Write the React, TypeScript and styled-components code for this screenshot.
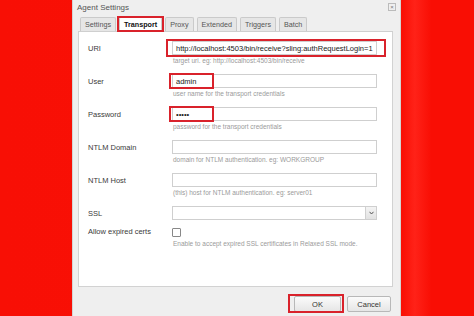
import React from "react";
import styled, { createGlobalStyle } from "styled-components";

const Global = createGlobalStyle`
  html, body { margin: 0; padding: 0; }
  body { width: 474px; height: 316px; overflow: hidden; font-family: "Liberation Sans", Arial, sans-serif; }
`;

const Page = styled.div`
  width: 474px;
  height: 316px;
  background: linear-gradient(90deg, #f80f05 0%, #fa1006 85%, #ff2218 87.5%, #f90e04 91%);
  display: flex;
  justify-content: center;
`;

const Dialog = styled.div`
  width: 329px;
  height: 316px;
  margin-left: -1px;
  background: #efefef;
  border-left: 1px solid #d4d4d4;
  border-right: 1px solid #d4d4d4;
  box-sizing: border-box;
  display: flex;
  flex-direction: column;
`;

const Header = styled.div`
  height: 15px;
  display: flex;
  align-items: center;
  justify-content: space-between;
  padding: 0 4px 0 4px;
  font-size: 8px;
  color: #555;
`;

const Close = styled.div`
  width: 6px;
  height: 6px;
  border: 1px solid #bbb;
  display: flex;
  align-items: center;
  justify-content: center;
  font-size: 6px;
  line-height: 6px;
  color: #777;
  margin-top: -2px;
`;

const TabStrip = styled.div`
  height: 16px;
  display: flex;
  align-items: flex-end;
  gap: 3px;
  padding-left: 2px;
  margin: 0 7px 0 5px;
  border-bottom: 1px solid #cfcfcf;
`;

const Tab = styled.div<{ $active?: boolean }>`
  position: relative;
  height: 13px;
  padding: 0 4px;
  display: flex;
  align-items: center;
  font-size: 7.2px;
  color: ${p => (p.$active ? "#111" : "#555")};
  font-weight: ${p => (p.$active ? 700 : 400)};
  background: ${p => (p.$active ? "#fff" : "#e6e6e6")};
  border: 1px solid #cacaca;
  border-bottom: none;
  border-radius: 2px 2px 0 0;
`;

const RedBox = styled.span`
  position: absolute;
  border: 2px solid #d9222b;
  pointer-events: none;
`;

const Panel = styled.div`
  flex: 1;
  margin: 0 7px 0 5px;
  background: #fff;
  border: 1px solid #d2d2d2;
  border-top: none;
  padding: 9px 0 0 9px;
  display: flex;
  flex-direction: column;
`;

const Row = styled.div<{ $h: number }>`
  display: grid;
  grid-template-columns: 84px 205px;
  height: ${p => p.$h}px;
`;

const Label = styled.div<{ $pt?: number }>`
  font-size: 7.5px;
  color: #3a3a3a;
  padding-top: ${p => (p.$pt ?? 3)}px;
`;

const Field = styled.div`
  display: flex;
  flex-direction: column;
`;

const InputBox = styled.div`
  position: relative;
  height: 14px;
  box-sizing: border-box;
  border: 1px solid #cfcfcf;
  background: #fff;
  display: flex;
  align-items: center;
  padding-left: 3px;
  font-size: 7.5px;
  color: #222;
  white-space: nowrap;
`;

const Arrow = styled.div`
  position: absolute;
  right: 0;
  top: 0;
  bottom: 0;
  width: 10px;
  background: linear-gradient(#f4f4f4, #e2e2e2);
  border-left: 1px solid #d0d0d0;
  display: flex;
  align-items: center;
  justify-content: center;
`;

const Hint = styled.div`
  font-size: 6.5px;
  color: #9a9a9a;
  padding: 2px 0 0 1px;
  white-space: nowrap;
`;

const Check = styled.div`
  width: 7px;
  height: 7px;
  border: 1px solid #888;
  border-radius: 1px;
  margin-top: 1px;
  margin-bottom: 1px;
`;

const Footer = styled.div`
  height: 29px;
  box-sizing: border-box;
  display: flex;
  align-items: flex-start;
  justify-content: flex-end;
  gap: 6px;
  padding: 9px 9px 0 0;
`;

const Button = styled.div<{ $w: number }>`
  position: relative;
  width: ${p => p.$w}px;
  height: 16px;
  box-sizing: border-box;
  border: 1px solid #b8b8b8;
  border-radius: 2px;
  background: linear-gradient(#fbfbfb, #e6e6e6);
  display: flex;
  align-items: center;
  justify-content: center;
  font-size: 7.5px;
  color: #333;
`;

type F = { label: string; value?: string; hint?: string; red?: [number, number, number]; select?: boolean };

const fields: F[] = [
  { label: "URI", value: "http://localhost:4503/bin/receive?sling:authRequestLogin=1", hint: "target uri. eg: http://localhost:4503/bin/receive", red: [-7, 216, -3] },
  { label: "User", value: "admin", hint: "user name for the transport credentials", red: [-4, 41, -2] },
  { label: "Password", value: "\u2022\u2022\u2022\u2022\u2022", hint: "password for the transport credentials", red: [-4, 41, -2] },
  { label: "NTLM Domain", hint: "domain for NTLM authentication. eg: WORKGROUP" },
  { label: "NTLM Host", hint: "(this) host for NTLM authentication. eg: server01" },
  { label: "SSL", select: true },
];

export default function App() {
  return (
    <>
      <Global />
      <Page>
        <Dialog>
          <Header>
            <span>Agent Settings</span>
            <Close>×</Close>
          </Header>
          <TabStrip>
            <Tab>Settings</Tab>
            <Tab $active>
              Transport
              <RedBox style={{ left: -3, top: -2, right: -3, bottom: -1 }} />
            </Tab>
            <Tab>Proxy</Tab>
            <Tab>Extended</Tab>
            <Tab>Triggers</Tab>
            <Tab>Batch</Tab>
          </TabStrip>
          <Panel>
            {fields.map(f => (
              <Row key={f.label} $h={f.hint ? 33 : 21}>
                <Label>{f.label}</Label>
                <Field>
                  <InputBox>
                    {f.value}
                    {f.red && (
                      <RedBox style={{ left: f.red[0], top: f.red[2], width: f.red[1], bottom: f.red[2] }} />
                    )}
                    {f.select && (
                      <Arrow>
                        <svg width="5" height="4" viewBox="0 0 5 4">
                          <path d="M0.5 0.8 L2.5 3 L4.5 0.8" stroke="#555" strokeWidth="1" fill="none" />
                        </svg>
                      </Arrow>
                    )}
                  </InputBox>
                  {f.hint && <Hint>{f.hint}</Hint>}
                </Field>
              </Row>
            ))}
            <Row $h={30}>
              <Label $pt={0}>Allow expired certs</Label>
              <Field>
                <Check />
                <Hint>Enable to accept expired SSL certificates in Relaxed SSL mode.</Hint>
              </Field>
            </Row>
          </Panel>
          <Footer>
            <Button $w={47}>
              OK
              <RedBox style={{ left: -7, top: -3, right: -4, bottom: -2 }} />
            </Button>
            <Button $w={44}>Cancel</Button>
          </Footer>
        </Dialog>
      </Page>
    </>
  );
}
